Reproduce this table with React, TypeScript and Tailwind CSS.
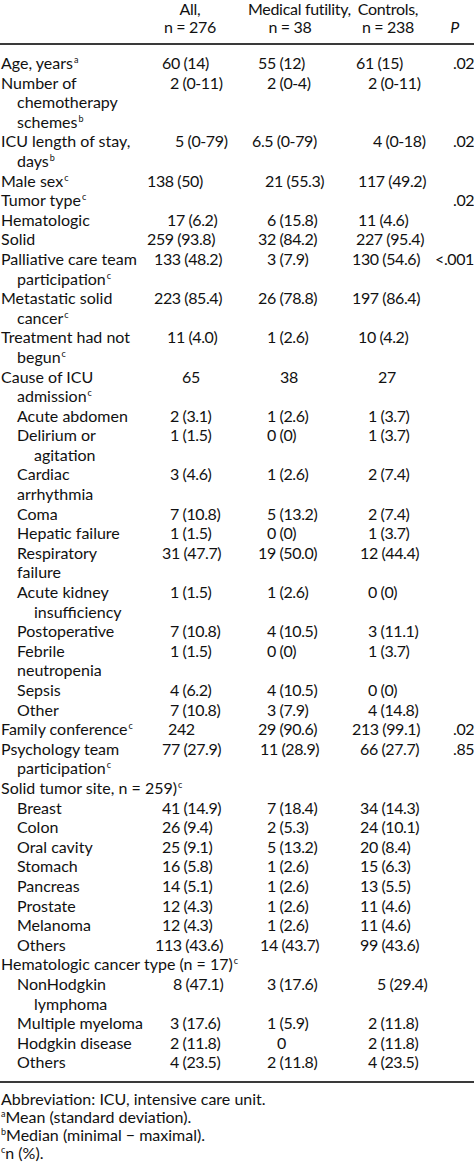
type Cell = [string, string];

type Row = {
  lines: [string, string][];
  sup?: string;
  vals?: (Cell | null)[];
};

const L0 = "pl-[1px]";
const L1 = "pl-[17px]";
const L2 = "pl-[34px]";

const rows: Row[] = [
  { lines: [["Age, years", L0]], sup: "a", vals: [["60 (14)", "pl-[15px]"], ["55 (12)", "pl-[10px]"], ["61 (15)", "pl-[4px]"], [".02", "pl-[18px]"]] },
  { lines: [["Number of", L0], ["chemotherapy", L1], ["schemes", L1]], sup: "b", vals: [["2 (0-11)", "pl-[23px]"], ["2 (0-4)", "pl-[19px]"], ["2 (0-11)", "pl-[16px]"], null] },
  { lines: [["ICU length of stay,", L0], ["days", L1]], sup: "b", vals: [["5 (0-79)", "pl-[28px]"], ["6.5 (0-79)", "pl-[4px]"], ["4 (0-18)", "pl-[21px]"], [".02", "pl-[18px]"]] },
  { lines: [["Male sex", L0]], sup: "c", vals: [["138 (50)", "pl-[0px]"], ["21 (55.3)", "pl-[17px]"], ["117 (49.2)", "pl-[6px]"], null] },
  { lines: [["Tumor type", L0]], sup: "c", vals: [null, null, null, [".02", "pl-[18px]"]] },
  { lines: [["Hematologic", L0]], vals: [["17 (6.2)", "pl-[20px]"], ["6 (15.8)", "pl-[19px]"], ["11 (4.6)", "pl-[6px]"], null] },
  { lines: [["Solid", L0]], vals: [["259 (93.8)", "pl-[0px]"], ["32 (84.2)", "pl-[10px]"], ["227 (95.4)", "pl-[4px]"], null] },
  { lines: [["Palliative care team", L0], ["participation", L1]], sup: "c", vals: [["133 (48.2)", "pl-[7px]"], ["3 (7.9)", "pl-[19px]"], ["130 (54.6)", "pl-[0px]"], ["<.001", "pl-[0px]"]] },
  { lines: [["Metastatic solid", L0], ["cancer", L1]], sup: "c", vals: [["223 (85.4)", "pl-[7px]"], ["26 (78.8)", "pl-[10px]"], ["197 (86.4)", "pl-[0px]"], null] },
  { lines: [["Treatment had not", L0], ["begun", L1]], sup: "c", vals: [["11 (4.0)", "pl-[20px]"], ["1 (2.6)", "pl-[19px]"], ["10 (4.2)", "pl-[6px]"], null] },
  { lines: [["Cause of ICU", L0], ["admission", L1]], sup: "c", vals: [["65", "pl-[35px]"], ["38", "pl-[32px]"], ["27", "pl-[26px]"], null] },
  { lines: [["Acute abdomen", L1]], vals: [["2 (3.1)", "pl-[23px]"], ["1 (2.6)", "pl-[19px]"], ["1 (3.7)", "pl-[16px]"], null] },
  { lines: [["Delirium or", L1], ["agitation", L2]], vals: [["1 (1.5)", "pl-[23px]"], ["0 (0)", "pl-[19px]"], ["1 (3.7)", "pl-[16px]"], null] },
  { lines: [["Cardiac", L1], ["arrhythmia", L1]], vals: [["3 (4.6)", "pl-[23px]"], ["1 (2.6)", "pl-[19px]"], ["2 (7.4)", "pl-[16px]"], null] },
  { lines: [["Coma", L1]], vals: [["7 (10.8)", "pl-[23px]"], ["5 (13.2)", "pl-[19px]"], ["2 (7.4)", "pl-[16px]"], null] },
  { lines: [["Hepatic failure", L1]], vals: [["1 (1.5)", "pl-[23px]"], ["0 (0)", "pl-[19px]"], ["1 (3.7)", "pl-[16px]"], null] },
  { lines: [["Respiratory", L1], ["failure", L1]], vals: [["31 (47.7)", "pl-[15px]"], ["19 (50.0)", "pl-[10px]"], ["12 (44.4)", "pl-[8px]"], null] },
  { lines: [["Acute kidney", L1], ["insufficiency", L2]], vals: [["1 (1.5)", "pl-[23px]"], ["1 (2.6)", "pl-[19px]"], ["0 (0)", "pl-[16px]"], null] },
  { lines: [["Postoperative", L1]], vals: [["7 (10.8)", "pl-[23px]"], ["4 (10.5)", "pl-[19px]"], ["3 (11.1)", "pl-[16px]"], null] },
  { lines: [["Febrile", L1], ["neutropenia", L1]], vals: [["1 (1.5)", "pl-[23px]"], ["0 (0)", "pl-[19px]"], ["1 (3.7)", "pl-[16px]"], null] },
  { lines: [["Sepsis", L1]], vals: [["4 (6.2)", "pl-[23px]"], ["4 (10.5)", "pl-[19px]"], ["0 (0)", "pl-[16px]"], null] },
  { lines: [["Other", L1]], vals: [["7 (10.8)", "pl-[23px]"], ["3 (7.9)", "pl-[19px]"], ["4 (14.8)", "pl-[16px]"], null] },
  { lines: [["Family conference", L0]], sup: "c", vals: [["242", "pl-[21px]"], ["29 (90.6)", "pl-[10px]"], ["213 (99.1)", "pl-[0px]"], [".02", "pl-[18px]"]] },
  { lines: [["Psychology team", L0], ["participation", L1]], sup: "c", vals: [["77 (27.9)", "pl-[15px]"], ["11 (28.9)", "pl-[12px]"], ["66 (27.7)", "pl-[8px]"], [".85", "pl-[18px]"]] },
  { lines: [["Solid tumor site, n = 259)", L0]], sup: "c" },
  { lines: [["Breast", L1]], vals: [["41 (14.9)", "pl-[15px]"], ["7 (18.4)", "pl-[19px]"], ["34 (14.3)", "pl-[8px]"], null] },
  { lines: [["Colon", L1]], vals: [["26 (9.4)", "pl-[15px]"], ["2 (5.3)", "pl-[19px]"], ["24 (10.1)", "pl-[8px]"], null] },
  { lines: [["Oral cavity", L1]], vals: [["25 (9.1)", "pl-[15px]"], ["5 (13.2)", "pl-[19px]"], ["20 (8.4)", "pl-[8px]"], null] },
  { lines: [["Stomach", L1]], vals: [["16 (5.8)", "pl-[15px]"], ["1 (2.6)", "pl-[19px]"], ["15 (6.3)", "pl-[8px]"], null] },
  { lines: [["Pancreas", L1]], vals: [["14 (5.1)", "pl-[15px]"], ["1 (2.6)", "pl-[19px]"], ["13 (5.5)", "pl-[8px]"], null] },
  { lines: [["Prostate", L1]], vals: [["12 (4.3)", "pl-[15px]"], ["1 (2.6)", "pl-[19px]"], ["11 (4.6)", "pl-[8px]"], null] },
  { lines: [["Melanoma", L1]], vals: [["12 (4.3)", "pl-[15px]"], ["1 (2.6)", "pl-[19px]"], ["11 (4.6)", "pl-[8px]"], null] },
  { lines: [["Others", L1]], vals: [["113 (43.6)", "pl-[8px]"], ["14 (43.7)", "pl-[12px]"], ["99 (43.6)", "pl-[8px]"], null] },
  { lines: [["Hematologic cancer type (n = 17)", L0]], sup: "c" },
  { lines: [["NonHodgkin", L1], ["lymphoma", L2]], vals: [["8 (47.1)", "pl-[26px]"], ["3 (17.6)", "pl-[19px]"], ["5 (29.4)", "pl-[25px]"], null] },
  { lines: [["Multiple myeloma", L1]], vals: [["3 (17.6)", "pl-[23px]"], ["1 (5.9)", "pl-[19px]"], ["2 (11.8)", "pl-[16px]"], null] },
  { lines: [["Hodgkin disease", L1]], vals: [["2 (11.8)", "pl-[23px]"], ["0", "pl-[29px]"], ["2 (11.8)", "pl-[16px]"], null] },
  { lines: [["Others", L1]], vals: [["4 (23.5)", "pl-[23px]"], ["2 (11.8)", "pl-[19px]"], ["4 (23.5)", "pl-[16px]"], null] },
];

// small raised letter that does not push the line box
const Sup = ({ t, className = "" }: { t: string; className?: string }) => (
  <span className={"relative -top-[6px] text-[9px] leading-none " + className}>{t}</span>
);

const grid = "grid grid-cols-[147px_101px_104px_83px_39px]";

const TableRow = ({ row }: { row: Row }) => {
  const last = row.lines.length - 1;
  return (
    <div className={grid}>
      <div className={row.vals ? "" : "col-span-5"}>
        {row.lines.map(([text, indent], i) => (
          <div key={i} className={"whitespace-nowrap " + indent}>
            {text}
            {row.sup && i === last && <Sup t={row.sup} className="ml-[1px]" />}
          </div>
        ))}
      </div>
      {row.vals?.map((v, i) => (
        <div key={i} className={"whitespace-nowrap tracking-[-0.4px] " + (v ? v[1] : "")}>
          {v ? v[0] : ""}
        </div>
      ))}
    </div>
  );
};

export default function App() {
  return (
    <div
      className="w-[474px] bg-white text-[16px] leading-[19.6px] text-[#111]"
      style={{ fontFamily: "Lato, 'Liberation Sans', sans-serif" }}
    >
      {/* header */}
      <div className={grid + " leading-[18px] tracking-[-0.3px]"}>
        <div />
        <div className="pr-[15px] text-center">
          <div>All,</div>
          <div>n = 276</div>
        </div>
        <div className="pr-[20px] text-center whitespace-nowrap">
          <div>Medical futility,</div>
          <div>n = 38</div>
        </div>
        <div className="pr-[11px] text-center">
          <div>Controls,</div>
          <div>n = 238</div>
        </div>
        <div className="text-center">
          <div>&nbsp;</div>
          <div className="italic">P</div>
        </div>
      </div>
      <div className="mt-[7px] h-[2px] bg-[#3a3a3a]" />

      {/* body */}
      <div className="pt-[8px] pb-[9px]">
        {rows.map((r, i) => (
          <TableRow key={i} row={r} />
        ))}
      </div>
      <div className="h-[2px] bg-[#3a3a3a]" />

      {/* footnotes */}
      <div className="pt-[7px] pl-[1px] leading-[18px]">
        <div>Abbreviation: ICU, intensive care unit.</div>
        <div>
          <Sup t="a" />Mean (standard deviation).
        </div>
        <div>
          <Sup t="b" />Median (minimal − maximal).
        </div>
        <div>
          <Sup t="c" />n (%).
        </div>
      </div>
    </div>
  );
}
